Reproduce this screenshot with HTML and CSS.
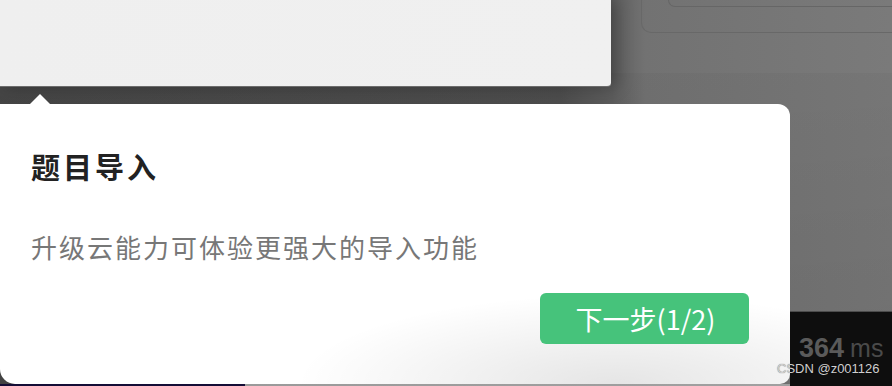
FILE: index.html
```html
<!DOCTYPE html>
<html lang="zh-CN">
<head>
<meta charset="utf-8">
<link rel="stylesheet" href="styles.css">
</head>
<body>
<div class="screen">
  <div class="backdrop">
    <div class="top-row">
      <div class="panel"></div>
      <div class="right-area">
        <div class="frame-outer"><div class="frame-inner"></div></div>
      </div>
    </div>
    <div class="spacer"></div>
    <div class="bottom-row">
      <div class="bottom-left"><div class="strip"></div></div>
      <div class="stats"><span class="num">364</span><span class="unit">ms</span></div>
    </div>
  </div>

  <div class="popover">
    <div class="arrow"></div>
    <h2 class="title">题目导入</h2>
    <p class="desc">升级云能力可体验更强大的导入功能</p>
    <div class="actions"><button class="next">下一步(1/2)</button></div>
  </div>

  <div class="watermark">CSDN @z001126</div>
</div>
</body>
</html>
```

FILE: styles.css
```css
html, body {
  margin: 0;
  padding: 0;
  background: #4a4a4a;
}
.screen {
  position: relative;
  width: 892px;
  height: 386px;
  overflow: hidden;
  font-family: "Noto Sans CJK SC", "Noto Sans", sans-serif;
}
.backdrop {
  width: 100%;
  height: 100%;
  display: flex;
  flex-direction: column;
  background:
    linear-gradient(180deg, rgba(0,0,0,0) 0, rgba(0,0,0,0) 73px, rgba(0,0,0,0.03) 73px, rgba(0,0,0,0.07) 311px),
    linear-gradient(90deg, #474747 0, #4f4f4f 560px, #5e5e5e 612px, #727272 645px, #7a7a7a 100%);
}
.top-row {
  display: flex;
  height: 87px;
}
.panel {
  width: 611px;
  height: 86px;
  background: linear-gradient(100deg, #efefef, #f0f0f0);
  border-bottom: 1px solid #6c6c6c;
  border-bottom-right-radius: 4px;
  box-shadow: 6px 0 16px rgba(0,0,0,0.25);
}
.right-area {
  flex: 1;
  padding-left: 30px;
}
.frame-outer {
  height: 32px;
  border-left: 1px solid #686868;
  border-bottom: 1px solid #686868;
  border-bottom-left-radius: 10px;
  padding-left: 26px;
}
.frame-inner {
  height: 6px;
  border-left: 1px solid #666;
  border-bottom: 1px solid #666;
  border-bottom-left-radius: 8px;
}
.spacer {
  flex: 1;
}
.bottom-row {
  display: flex;
  height: 75px;
}
.bottom-left {
  flex: 1;
  display: flex;
  flex-direction: column;
  justify-content: flex-end;
}
.strip {
  height: 2px;
  background: linear-gradient(90deg, #140d36 0, #140d36 245px, #9a9a9a 245px, #a0a0a0 100%);
}
.stats {
  width: 102px;
  background: #0e0e0e;
  border-top: 1px solid #4c4c4c;
  box-sizing: border-box;
  padding: 21px 0 0 9px;
  font-family: "Liberation Sans", Arial, sans-serif;
  font-size: 27px;
  line-height: 30px;
  white-space: nowrap;
}
.num {
  color: #5a5a5a;
  font-weight: 700;
}
.unit {
  color: #4a4a4a;
  margin-left: 6px;
  font-size: 25px;
}

/* tour popover */
.popover {
  position: absolute;
  left: 0;
  top: 104px;
  width: 790px;
  height: 280px;
  box-sizing: border-box;
  padding: 40px 41px 0 31px;
  background:
    radial-gradient(ellipse 320px 90px at 78% 100%, rgba(0,0,0,0.10), rgba(0,0,0,0) 100%),
    #ffffff;
  border-radius: 0 12px 10px 15px;
  display: flex;
  flex-direction: column;
}
.arrow {
  position: absolute;
  left: 30px;
  top: -10px;
  width: 0;
  height: 0;
  border-left: 10px solid transparent;
  border-right: 10px solid transparent;
  border-bottom: 10px solid #ffffff;
}
.title {
  margin: 0;
  font-size: 29px;
  font-weight: 700;
  letter-spacing: 3px;
  line-height: 44px;
  color: #222222;
}
.desc {
  margin: 41px 0 0;
  font-size: 26px;
  letter-spacing: 2px;
  line-height: 36px;
  color: #777777;
}
.actions {
  display: flex;
  justify-content: flex-end;
  margin-top: 28px;
}
.next {
  width: 209px;
  height: 51px;
  border: none;
  border-radius: 6px;
  background: #46c37b;
  color: #ffffff;
  font-family: "Noto Sans CJK SC", "Noto Sans", sans-serif;
  font-size: 27px;
  padding: 0 0 0 2px;
}
.watermark {
  position: absolute;
  left: 777px;
  top: 361px;
  font-family: "Liberation Sans", Arial, sans-serif;
  font-size: 13px;
  color: #cfcfcf;
  text-shadow: 0 0 1px rgba(0,0,0,0.6);
  white-space: nowrap;
}
```
